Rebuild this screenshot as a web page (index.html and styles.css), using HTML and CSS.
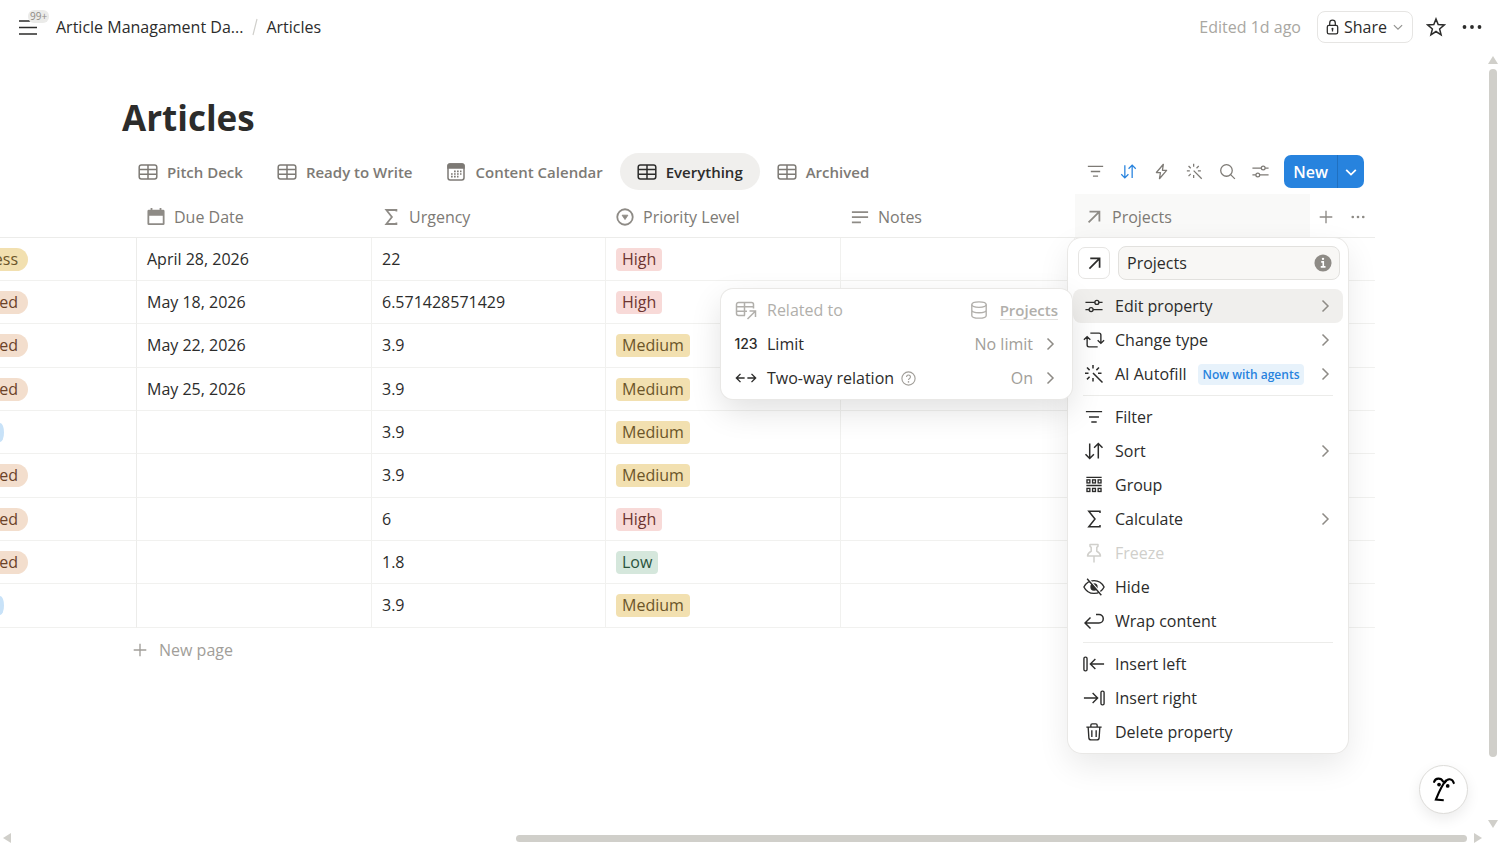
FILE: index.html
```html
<!DOCTYPE html>
<html lang="en">
<head>
<meta charset="utf-8">
<meta name="viewport" content="width=device-width, initial-scale=1">
<title>Articles</title>
<link rel="stylesheet" href="styles.css">
</head>
<body>
<svg class="sprite" aria-hidden="true">
  <symbol id="table" viewBox="0 0 20 20"><rect x="1.2" y="3" width="17.6" height="14" rx="2.2"/><path d="M1.2 7.6h17.6M1.2 12.3h17.6M10 3v14"/></symbol>
  <symbol id="calendar" viewBox="0 0 20 20"><rect x="2" y="2" width="16" height="16" rx="2.2"/><path class="solid" d="M2 6V4a2 2 0 0 1 2-2h12a2 2 0 0 1 2 2v2z"/><path stroke-width="1.7" stroke-dasharray="1.7 1.3" d="M8 9.4h7.5M5 12h10.500M5 14.700h7.500"/></symbol>
  <symbol id="date" viewBox="0 0 20 20"><path class="fill" fill-rule="evenodd" d="M4 0h2v2h8V0h2v2h2a1.500 1.500 0 0 1 1.500 1.500v14A1.500 1.500 0 0 1 18 19H2a1.500 1.500 0 0 1-1.500-1.500v-14A1.500 1.500 0 0 1 2 2h2zM2.500 8.500V17h15V8.500z"/></symbol>
  <symbol id="sigma" viewBox="0 0 20 20"><path d="M16 4V2.200H4.800l6.200 7.800-6.200 7.800H16V16"/></symbol>
  <symbol id="select" viewBox="0 0 20 20"><circle cx="10" cy="10" r="8.600"/><path class="solid" stroke-width="1" stroke-linejoin="round" d="M6.800 8h6.400L10 12.800z"/></symbol>
  <symbol id="lines" viewBox="0 0 20 20"><path d="M1 4.500h18M1 10.200h18M1 16h10"/></symbol>
  <symbol id="arrow" viewBox="0 0 20 20"><path d="M5 4h11v11M16 4 4 16"/></symbol>
  <symbol id="filter" viewBox="0 0 20 20"><path d="M1 4h18M4.500 10h11M7 15.500h6"/></symbol>
  <symbol id="sort" viewBox="0 0 20 20"><path d="M5.700 2.500v15M1.500 13.200l4.200 4.300 4.200-4.300M14.300 17.500v-15M10.100 6.800l4.200-4.300 4.200 4.300"/></symbol>
  <symbol id="bolt" viewBox="0 0 20 20"><path stroke-linejoin="round" d="M12.200 1.500 4 11.200h4.800L7.600 18.500 16 8.600h-4.900z"/></symbol>
  <symbol id="wand" viewBox="0 0 20 20"><path d="M9 9l9.500 9.500M9 1v3.500M9 14v3.500M1 9.300h3.500M14 9.300h3.500M3 3.500l2.600 2.600M15 3.500l-2.600 2.600M3 15.400l2.600-2.600"/></symbol>
  <symbol id="search" viewBox="0 0 20 20"><circle cx="8.800" cy="8.800" r="6.800"/><path d="M13.700 13.700l5 5"/></symbol>
  <symbol id="sliders" viewBox="0 0 20 20"><path d="M.5 6h10.500M15.400 6h4.100M.5 14h4.100M9 14h10.500"/><circle cx="13.200" cy="6" r="2.200"/><circle cx="6.800" cy="14" r="2.200"/></symbol>
  <symbol id="plus" viewBox="0 0 20 20"><path d="M10 3v14M3 10h14"/></symbol>
  <symbol id="dots" viewBox="0 0 20 20"><g class="fill"><circle cx="2.500" cy="10" r="1.900"/><circle cx="10" cy="10" r="1.900"/><circle cx="17.500" cy="10" r="1.900"/></g></symbol>
  <symbol id="right" viewBox="0 0 16 16"><path d="M5.500 2.500 11 8l-5.500 5.500"/></symbol>
  <symbol id="down" viewBox="0 0 16 16"><path d="M2.500 5.500 8 11l5.500-5.500"/></symbol>
  <symbol id="lock" viewBox="0 0 16 20"><rect x="1.500" y="8" width="13" height="10.500" rx="2"/><path d="M4.500 8V5a3.500 3.500 0 0 1 7 0v3M8 12.500v3"/><circle class="fill" cx="8" cy="12.300" r="1.300"/></symbol>
  <symbol id="star" viewBox="0 0 20 20"><path d="M10 2l2.200 5.600 6 .4-4.600 3.900 1.500 5.900L10 14.500l-5.100 3.300 1.500-5.900L1.800 8l6-.4z"/></symbol>
  <symbol id="change" viewBox="0 0 24 20"><path d="M8 2.500h9.500a2 2 0 0 1 2 2v9M16 10.200l3.500 3.500 3.500-3.500M16 17.500H6.500a2 2 0 0 1-2-2v-9M1 9.800l3.500-3.500L8 9.800"/></symbol>
  <symbol id="group" viewBox="0 0 20 20"><path d="M1.500 1.500h17M1.500 10.500h17"/><rect x="2.200" y="4.300" width="3.200" height="3.400"/><rect x="8.400" y="4.300" width="3.200" height="3.400"/><rect x="14.600" y="4.300" width="3.200" height="3.400"/><rect x="2.200" y="13.800" width="3.200" height="3.400"/><rect x="8.400" y="13.800" width="3.200" height="3.400"/><rect x="14.600" y="13.800" width="3.200" height="3.400"/></symbol>
  <symbol id="pin" viewBox="0 0 20 20"><path stroke-linejoin="round" d="M6 1.500h8v1.800l-1.200 1v4c2 .9 3.400 2.500 3.700 4.700h-13c.3-2.200 1.700-3.800 3.700-4.700v-4L6 3.300zM10 13v6.500"/></symbol>
  <symbol id="hide" viewBox="0 0 24 20"><path d="M1 10c2.200-4.500 6.300-7 11-7s8.800 2.500 11 7c-2.200 4.500-6.300 7-11 7S3.200 14.500 1 10z"/><circle class="fill" cx="12" cy="10" r="4"/><path class="gap" d="M6 1l15.500 18"/><path d="M4.500 1l15.500 18"/></symbol>
  <symbol id="wrap" viewBox="0 0 20 20"><path d="M12 3.500h3a4 4 0 0 1 0 8.500H1.500M6.500 6.500 1 12l5.500 5.500"/></symbol>
  <symbol id="insleft" viewBox="0 0 24 20"><rect x="1" y="2.500" width="3.400" height="15" rx="1.500"/><path d="M23 10H8M13.500 4.500 8 10l5.500 5.500"/></symbol>
  <symbol id="insright" viewBox="0 0 24 20"><rect x="19.600" y="2.500" width="3.400" height="15" rx="1.500"/><path d="M1 10h15M10.500 4.500 16 10l-5.500 5.500"/></symbol>
  <symbol id="trash" viewBox="0 0 20 20"><path d="M1.500 4.500h17M6.500 4.500v-2a1.500 1.500 0 0 1 1.500-1.500h4a1.500 1.500 0 0 1 1.500 1.500v2M3.500 4.500l.8 12a2.500 2.500 0 0 0 2.500 2.300h6.400a2.500 2.500 0 0 0 2.500-2.300l.8-12M7.600 8v7.500M12.400 8v7.500"/></symbol>
  <symbol id="related" viewBox="0 0 22 20"><path d="M10 15.500H3.500a2 2 0 0 1-2-2v-9a2 2 0 0 1 2-2h13a2 2 0 0 1 2 2v4M1.500 6.800h17M1.500 11.200h10.500M9.500 2.500v13M12.500 19l8-8M14.500 11h6v6"/></symbol>
  <symbol id="database" viewBox="0 0 20 20"><ellipse cx="10" cy="4" rx="8" ry="3"/><path d="M2 4v12c0 1.700 3.600 3 8 3s8-1.300 8-3V4M2 10c0 1.700 3.600 3 8 3s8-1.300 8-3"/></symbol>
  <symbol id="twoway" viewBox="0 0 24 20"><path d="M1.500 10h9M13.500 10h9M6 5.500 1.500 10 6 14.500M18 5.500l4.500 4.500-4.500 4.500"/></symbol>
  <symbol id="help" viewBox="0 0 20 20"><circle cx="10" cy="10" r="8.800"/><path d="M7.400 8a2.600 2.600 0 1 1 4 2.100c-.9.600-1.400 1-1.400 2"/><circle class="fill" cx="10" cy="14.500" r="1.100"/></symbol>
  <symbol id="info" viewBox="0 0 20 20"><circle class="fill" cx="10" cy="10" r="9.500"/><g stroke="#fff"><path stroke-width="1.800" d="M8 8.700h2.300v5.600M7.500 14.300h5.300"/><circle cx="10" cy="5.400" r=".6"/></g></symbol>
  <symbol id="menu" viewBox="0 0 20 20"><path d="M1 4h18M1 10.500h18M1 17h18"/></symbol>
  <symbol id="face" viewBox="0 0 28 32"><path stroke-linecap="round" stroke-width="2.400" d="M3.500 7.500C5 3 11 2.500 13.500 7M15.500 8c3-5 8.500-4.500 10 .8"/><path stroke-width="2.400" d="M17 5.500C11.500 12 9 18.500 5.500 27.300l8.800.8"/><circle class="fill" cx="9" cy="10.500" r="2.100"/><circle class="fill" cx="18.700" cy="12" r="2.100"/></symbol>
</svg>

<div class="app">
  <header class="topbar">
    <button class="plain burger" type="button" aria-label="Open sidebar"><svg class="icon i20"><use href="#menu"/></svg><span class="count">99+</span></button>
    <nav class="crumbs" aria-label="Breadcrumb"><a href="#">Article Managament Da...</a><svg class="slash" viewBox="0 0 6 18"><path d="M5 1 1 17"/></svg><a href="#">Articles</a></nav>
    <span class="edited">Edited 1d ago</span>
    <button class="share" type="button"><svg class="icon lock"><use href="#lock"/></svg>Share<svg class="icon i12"><use href="#down"/></svg></button>
    <button class="plain" type="button" aria-label="Favourite"><svg class="icon i20"><use href="#star"/></svg></button>
    <button class="plain" type="button" aria-label="More"><svg class="icon i20"><use href="#dots"/></svg></button>
  </header>

  <main class="main">
    <h1 class="title">Articles</h1>
    <div class="viewbar">
      <nav class="tabs" aria-label="Views">
        <button class="tab" type="button"><svg class="icon i20"><use href="#table"/></svg>Pitch Deck</button>
        <button class="tab" type="button"><svg class="icon i20"><use href="#table"/></svg>Ready to Write</button>
        <button class="tab" type="button"><svg class="icon i20"><use href="#calendar"/></svg>Content Calendar</button>
        <button class="tab active" type="button"><svg class="icon i20"><use href="#table"/></svg>Everything</button>
        <button class="tab" type="button"><svg class="icon i20"><use href="#table"/></svg>Archived</button>
      </nav>
      <div class="tools">
        <button class="plain" type="button" aria-label="Filter"><svg class="icon i16"><use href="#filter"/></svg></button>
        <button class="plain blue" type="button" aria-label="Sort"><svg class="icon i16"><use href="#sort"/></svg></button>
        <button class="plain" type="button" aria-label="Automations"><svg class="icon i16"><use href="#bolt"/></svg></button>
        <button class="plain" type="button" aria-label="AI"><svg class="icon i16"><use href="#wand"/></svg></button>
        <button class="plain" type="button" aria-label="Search"><svg class="icon i16"><use href="#search"/></svg></button>
        <button class="plain" type="button" aria-label="Settings"><svg class="icon i16"><use href="#sliders"/></svg></button>
      </div>
      <div class="new"><button class="new-main" type="button">New</button><button class="new-more" type="button" aria-label="Templates"><svg class="icon i14"><use href="#down"/></svg></button></div>
    </div>

    <table class="grid">
      <colgroup><col class="c-status"><col class="c"><col class="c-alt"><col class="c"><col class="c-alt"><col class="c"><col></colgroup>
      <thead>
        <tr>
          <th></th>
          <th><div class="head"><svg class="icon i18"><use href="#date"/></svg>Due Date</div></th>
          <th><div class="head"><svg class="icon i18 bold"><use href="#sigma"/></svg>Urgency</div></th>
          <th><div class="head"><svg class="icon i18 bold"><use href="#select"/></svg>Priority Level</div></th>
          <th><div class="head"><svg class="icon i18 bold"><use href="#lines"/></svg>Notes</div></th>
          <th class="anchor">
            <div class="head open"><svg class="icon i18 bold"><use href="#arrow"/></svg>Projects</div>
            <div class="menu">
              <div class="rename">
                <button class="typebtn" type="button" aria-label="Property icon"><svg class="icon i16 bold"><use href="#arrow"/></svg></button>
                <label class="field"><input type="text" value="Projects" aria-label="Property name"><svg class="icon info"><use href="#info"/></svg></label>
              </div>
              <div class="subanchor">
                <button class="item hot" type="button"><span class="ico"><svg class="icon i18"><use href="#sliders"/></svg></span>Edit property<svg class="icon chev"><use href="#right"/></svg></button>
                <div class="submenu">
                  <button class="item off" type="button"><span class="ico"><svg class="icon i22"><use href="#related"/></svg></span>Related to<span class="value"><svg class="icon i18"><use href="#database"/></svg><span class="link">Projects</span></span></button>
                  <button class="item" type="button"><span class="ico num">123</span>Limit<span class="value">No limit</span><svg class="icon chev"><use href="#right"/></svg></button>
                  <button class="item" type="button"><span class="ico"><svg class="icon i22"><use href="#twoway"/></svg></span>Two-way relation<svg class="icon help"><use href="#help"/></svg><span class="value">On</span><svg class="icon chev"><use href="#right"/></svg></button>
                </div>
              </div>
              <button class="item" type="button"><span class="ico"><svg class="icon i22"><use href="#change"/></svg></span>Change type<svg class="icon chev"><use href="#right"/></svg></button>
              <button class="item" type="button"><span class="ico"><svg class="icon i20"><use href="#wand"/></svg></span>AI Autofill<span class="badge">Now with agents</span><svg class="icon chev"><use href="#right"/></svg></button>
              <hr class="sep">
              <button class="item" type="button"><span class="ico"><svg class="icon i18"><use href="#filter"/></svg></span>Filter</button>
              <button class="item" type="button"><span class="ico"><svg class="icon i20"><use href="#sort"/></svg></span>Sort<svg class="icon chev"><use href="#right"/></svg></button>
              <button class="item" type="button"><span class="ico"><svg class="icon i18"><use href="#group"/></svg></span>Group</button>
              <button class="item" type="button"><span class="ico"><svg class="icon i20"><use href="#sigma"/></svg></span>Calculate<svg class="icon chev"><use href="#right"/></svg></button>
              <button class="item disabled" type="button" disabled><span class="ico"><svg class="icon i20"><use href="#pin"/></svg></span>Freeze</button>
              <button class="item" type="button"><span class="ico"><svg class="icon i22"><use href="#hide"/></svg></span>Hide</button>
              <button class="item" type="button"><span class="ico"><svg class="icon i20"><use href="#wrap"/></svg></span>Wrap content</button>
              <hr class="sep">
              <button class="item" type="button"><span class="ico"><svg class="icon i22"><use href="#insleft"/></svg></span>Insert left</button>
              <button class="item" type="button"><span class="ico"><svg class="icon i22"><use href="#insright"/></svg></span>Insert right</button>
              <button class="item" type="button"><span class="ico"><svg class="icon i18"><use href="#trash"/></svg></span>Delete property</button>
            </div>
          </th>
          <th><div class="head extra"><svg class="icon i18"><use href="#plus"/></svg><svg class="icon i14"><use href="#dots"/></svg></div></th>
        </tr>
      </thead>
      <tbody>
        <tr><td class="status"><span class="pill gold">ess</span></td><td>April 28, 2026</td><td>22</td><td><span class="tag red">High</span></td><td></td><td></td><td></td></tr>
        <tr><td class="status"><span class="pill tan">ed</span></td><td>May 18, 2026</td><td>6.571428571429</td><td><span class="tag red">High</span></td><td></td><td></td><td></td></tr>
        <tr><td class="status"><span class="pill tan">ed</span></td><td>May 22, 2026</td><td>3.9</td><td><span class="tag gold">Medium</span></td><td></td><td></td><td></td></tr>
        <tr><td class="status"><span class="pill tan">ed</span></td><td>May 25, 2026</td><td>3.9</td><td><span class="tag gold">Medium</span></td><td></td><td></td><td></td></tr>
        <tr><td class="status"><span class="pill sky"></span></td><td></td><td>3.9</td><td><span class="tag gold">Medium</span></td><td></td><td></td><td></td></tr>
        <tr><td class="status"><span class="pill tan">ed</span></td><td></td><td>3.9</td><td><span class="tag gold">Medium</span></td><td></td><td></td><td></td></tr>
        <tr><td class="status"><span class="pill tan">ed</span></td><td></td><td>6</td><td><span class="tag red">High</span></td><td></td><td></td><td></td></tr>
        <tr><td class="status"><span class="pill tan">ed</span></td><td></td><td>1.8</td><td><span class="tag green">Low</span></td><td></td><td></td><td></td></tr>
        <tr><td class="status"><span class="pill sky"></span></td><td></td><td>3.9</td><td><span class="tag gold">Medium</span></td><td></td><td></td><td></td></tr>
      </tbody>
    </table>
    <button class="newpage" type="button"><svg class="icon i18"><use href="#plus"/></svg>New page</button>
  </main>

  <div class="vbar" aria-hidden="true"><svg viewBox="0 0 10 8"><path d="M5 0l5 8H0z"/></svg><span class="thumb"></span><span class="rest"></span><svg viewBox="0 0 10 8"><path d="M5 8l5-8H0z"/></svg></div>
  <div class="hbar" aria-hidden="true"><svg viewBox="0 0 8 10"><path d="M0 5l8-5v10z"/></svg><span class="rest"></span><span class="thumb"></span><svg viewBox="0 0 8 10"><path d="M8 5L0 0v10z"/></svg></div>
  <button class="assistant" type="button" aria-label="Assistant"><svg class="icon face"><use href="#face"/></svg></button>
</div>
</body>
</html>
```
FILE: styles.css
```css
* { box-sizing: border-box; }
body {
  margin: 0;
  background: #fff;
  color: #2c2c2b;
  font: 16px/24px "Open Sans", "Noto Sans", sans-serif;
}
button, input { font: inherit; color: inherit; }
button { border: 0; padding: 0; background: none; cursor: pointer; }
a { color: inherit; text-decoration: none; }
.sprite { position: absolute; width: 0; height: 0; }

.icon { flex: none; display: block; fill: none; stroke: currentColor; stroke-width: 1.5; overflow: visible; }
.fill { fill: currentColor; stroke: none; }
.solid { fill: currentColor; }
.gap { stroke: #fff; }
.bold { stroke-width: 2; }
.i12 { width: 12px; height: 12px; }
.i14 { width: 14px; height: 14px; }
.i16 { width: 17px; height: 17px; }
.i18 { width: 18px; height: 18px; }
.i20 { width: 20px; height: 20px; }
.i22 { width: 22px; height: 20px; }

.app {
  display: grid;
  grid-template: 53px minmax(0, 1fr) 16px / minmax(0, 1fr) 15px;
  height: 100vh;
  overflow: hidden;
}
.topbar {
  grid-column: 1 / -1;
  display: flex;
  align-items: center;
  gap: 16px;
  padding: 0 18px;
}
.burger { position: relative; }
.count {
  position: absolute;
  left: 10px;
  top: -7px;
  padding: 0 2px;
  border-radius: 6px;
  background: #ebebe9;
  color: #8e8b86;
  font-size: 10px;
  line-height: 13px;
}
.crumbs { display: flex; align-items: center; gap: 8px; padding-left: 2px; }
.slash { width: 6px; height: 18px; margin-left: 1px; fill: none; stroke: #d0cfcb; stroke-width: 1.2; }
.edited { margin-left: auto; color: #a9a7a2; }
.share {
  display: flex;
  align-items: center;
  gap: 5px;
  height: 32px;
  padding: 0 8px;
  border: 1px solid #e6e5e3;
  border-radius: 8px;
}
.share .i12 { color: #91918e; }
.share + .plain { margin-left: -3px; }
.lock { width: 13px; height: 16px; stroke-width: 1.6; }

.main { overflow: hidden; }
.title { margin: 38px 0 9px 122px; font-size: 35px; line-height: 53px; }
.viewbar { display: flex; align-items: center; margin: 0 121px; }
.tabs { display: flex; }
.tab {
  display: flex;
  align-items: center;
  gap: 9px;
  height: 37px;
  padding: 1px 17px 0;
  border-radius: 19px;
  color: #7d7a75;
  font-size: 15px;
  font-weight: 600;
  white-space: nowrap;
}
.tab.active { background: #f0efed; color: #2c2c2b; }
.tools { display: flex; gap: 16px; margin: 0 15px 0 auto; color: #7d7a75; }
.blue { color: #2783de; }
.new { display: flex; height: 33px; border-radius: 7px; overflow: hidden; background: #2783de; color: #fff; }
.new-main { padding: 0 9px; font-weight: 600; }
.new-more { padding: 0 6px; border-left: 1px solid #2070c0; }
.new-more .icon { stroke-width: 2; }

.grid {
  width: calc(100% - 110px);
  margin-top: 4px;
  border-collapse: separate;
  border-spacing: 0;
  table-layout: fixed;
}
.c-status { width: 137px; }
.c { width: 235px; }
.c-alt { width: 234px; }
th { padding: 0; border-bottom: 1px solid #ececea; font-weight: 400; text-align: left; }
.head { display: flex; align-items: center; gap: 9px; height: 43px; padding: 2px 10px 0; color: #7d7a75; }
.head .icon { color: #8e8b86; }
.open { background: #f9f9f8; }
.extra { gap: 16px; padding: 2px 7px 0; }
td { height: 43px; padding: 0 10px; border-right: 1px solid #f1f1ef; border-bottom: 1px solid #f1f1ef; line-height: 23px; }
td:first-child { border-right-color: #ececea; }
td:nth-child(6), td:last-child { border-right: 0; }
tr:nth-child(3n) td { height: 44px; }
.status { padding: 0; }
.tag { display: inline-block; padding: 0 6px; border-radius: 4px; }
.pill { display: block; width: 28px; height: 23px; padding-right: 10px; border-radius: 0 12px 12px 0; direction: rtl; overflow: hidden; }
.red { background: #f8dad8; color: #6d3531; }
.gold { background: #f2e0b0; color: #6b5529; }
.green { background: #d5e7dc; color: #2a533c; }
.tan { background: #f3decd; color: #6b4228; }
.sky { width: 4px; height: 19px; padding: 0; border-radius: 0 4px 4px 0 / 0 10px 10px 0; background: #c8e2f8; }
.newpage { display: flex; align-items: center; gap: 10px; margin: 10px 0 0 131px; color: #a19e99; }

.anchor { position: relative; }
.menu {
  position: absolute;
  z-index: 2;
  top: 100%;
  left: -7px;
  width: 280px;
  margin-top: 1px;
  padding: 8px 5px 4px;
  border-radius: 14px;
  background: #fff;
  box-shadow: 0 0 0 1px #e9e8e6, 0 12px 32px rgba(0, 0, 0, 0.09);
}
.rename { display: flex; align-items: center; gap: 8px; margin: 0 3px 9px 5px; }
.typebtn { flex: none; display: grid; place-items: center; width: 32px; height: 32px; border: 1px solid #e6e5e3; border-radius: 7px; }
.field { flex: 1; display: flex; align-items: center; min-width: 0; height: 34px; padding: 0 7px 0 8px; border: 1px solid #e2e1de; border-radius: 8px; background: #f8f7f5; }
.field input { flex: 1; min-width: 0; padding: 0; border: 0; outline: 0; background: none; }
.info { width: 18px; height: 18px; color: #8e8b86; }
.item { display: flex; align-items: center; width: 100%; height: 34px; padding: 0 10px; border-radius: 8px; text-align: left; white-space: nowrap; }
.hot { background: #f0efed; }
.ico { flex: none; display: flex; justify-content: center; width: 22px; margin-right: 10px; }
.chev { width: 16px; height: 16px; margin-left: auto; color: #8e8b86; }
.badge { margin-left: 11px; padding: 0 5px; border-radius: 4px; background: #e7f2fb; color: #2783de; font-size: 12px; font-weight: 600; line-height: 21px; }
.sep { height: 1px; margin: 4px 10px; border: 0; background: #ececea; }
.disabled { color: #d0cfcb; }
.subanchor { position: relative; }
.submenu {
  position: absolute;
  top: 0;
  right: 271px;
  width: 351px;
  padding: 4px 5px;
  border-radius: 12px;
  background: #fff;
  box-shadow: 0 0 0 1px #e9e8e6, 0 12px 32px rgba(0, 0, 0, 0.12);
}
.submenu .item { padding: 0 9px; }
.num { font-family: Inter, sans-serif; font-size: 14px; font-weight: 500; }
.value { display: flex; align-items: center; gap: 12px; margin-left: auto; color: #a19e99; }
.value + .chev { margin-left: 9px; }
.off, .off .value { color: #b1afab; }
.link { border-bottom: 1px solid #e2e1de; font-size: 15px; font-weight: 600; line-height: 18px; }
.help { width: 15px; height: 15px; margin-left: 7px; color: #a19e99; }

.vbar, .hbar { display: flex; fill: #d0cfca; }
.vbar { flex-direction: column; align-items: center; padding: 3px 0 0; }
.hbar { align-items: center; padding: 4px 0 0 3px; margin-right: 3px; }
.vbar svg { flex: none; width: 10px; height: 8px; }
.hbar svg { flex: none; width: 8px; height: 10px; }
.thumb { border-radius: 4px; background: #d0cfca; }
.vbar .thumb { flex: 688; width: 8px; margin-top: 5px; }
.vbar .rest { flex: 63; }
.hbar .rest { flex: 505; }
.hbar .thumb { flex: 951; height: 7px; margin-right: 7px; }
.assistant {
  position: absolute;
  right: 32px;
  bottom: 30px;
  z-index: 3;
  display: grid;
  place-items: center;
  width: 49px;
  height: 49px;
  border: 1px solid #dddcd9;
  border-radius: 50%;
  background: #fff;
  color: #000;
  box-shadow: 0 5px 14px rgba(0, 0, 0, 0.08);
}
.face { width: 25px; height: 29px; }
```
